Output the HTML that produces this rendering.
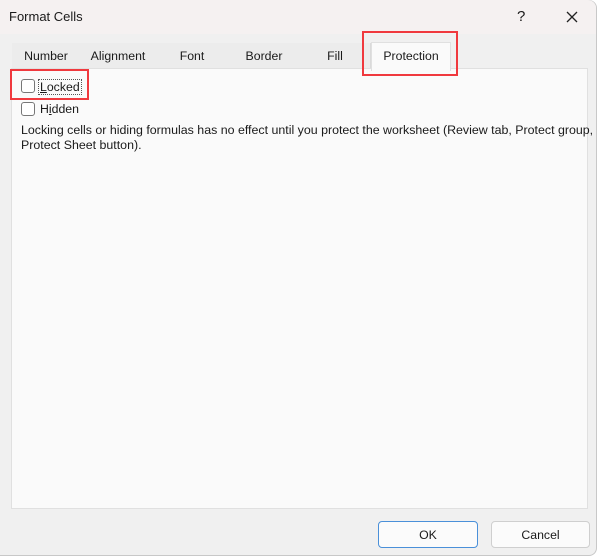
<!DOCTYPE html>
<html><head><style>
body{margin:0;width:600px;height:557px;background:#fff;font-family:"Liberation Sans",sans-serif;font-size:12px;color:#1a1a1a;overflow:hidden;position:relative}
.win{position:absolute;left:0;top:0;width:597px;height:556px;background:#f0f0f0;border:1px solid #c8c8c8;border-radius:0 8px 8px 0;border-left:none;box-sizing:border-box}
.title{position:absolute;left:0;top:0;width:596px;height:34px;background:#f5f1f1;border-radius:0 8px 0 0}
.tt{position:absolute;left:9px;top:9px;font-size:13px}
.tab{position:absolute;top:43px;height:25px;line-height:26px;text-align:center;background:#ececec;border-right:1px solid #dadada;font-size:12.3px}
.panel{position:absolute;left:11px;top:68px;width:577px;height:441px;background:#fafafa;border:1px solid #e0e0e0;box-sizing:border-box}
.cb{position:absolute;width:12px;height:12px;border:1px solid #777;border-radius:3px;background:#fff}
.red{position:absolute;border:2px solid #f0393e;box-sizing:border-box}
.btn{position:absolute;top:521px;height:27px;line-height:27px;text-align:center;border:1px solid #cfcfcf;border-radius:4px;background:#fbfbfb;box-sizing:border-box;font-size:12.3px}
</style></head><body>
<div class="win"></div>
<div class="title"></div>
<div class="tt">Format Cells</div>
<div style="position:absolute;left:517px;top:8px;font-size:15px">?</div>
<svg style="position:absolute;left:566px;top:11px" width="12" height="12"><path d="M1 1L11 11M11 1L1 11" stroke="#222" stroke-width="1.3"/></svg>
<div class="tab" style="left:12px;width:68px">Number</div>
<div class="tab" style="left:80px;width:76px">Alignment</div>
<div class="tab" style="left:156px;width:72px">Font</div>
<div class="tab" style="left:228px;width:72px">Border</div>
<div class="tab" style="left:300px;width:70px">Fill</div>
<div class="panel"></div>
<div class="tab" style="left:371px;width:78px;top:42px;height:28px;background:#fafafa;border:1px solid #e0e0e0;border-bottom:none;line-height:26px">Protection</div>
<div class="red" style="left:362px;top:31px;width:96px;height:45px"></div>
<div class="cb" style="left:21px;top:79px"></div>
<div style="position:absolute;left:38px;top:79px;border:1px dotted #555;padding:0 1px;line-height:14px;font-size:12.3px"><u>L</u>ocked</div>
<div class="red" style="left:10px;top:69px;width:79px;height:31px"></div>
<div class="cb" style="left:21px;top:102px"></div>
<div style="position:absolute;left:40px;top:102px;line-height:14px;font-size:12.3px">H<u>i</u>dden</div>
<div style="position:absolute;left:21px;top:123px;line-height:15px;width:575px;font-size:12.4px">Locking cells or hiding formulas has no effect until you protect the worksheet (Review tab, Protect group, Protect Sheet button).</div>
<div class="btn" style="left:378px;width:100px;border:1px solid #4a90d9">OK</div>
<div class="btn" style="left:491px;width:99px">Cancel</div>
</body></html>
